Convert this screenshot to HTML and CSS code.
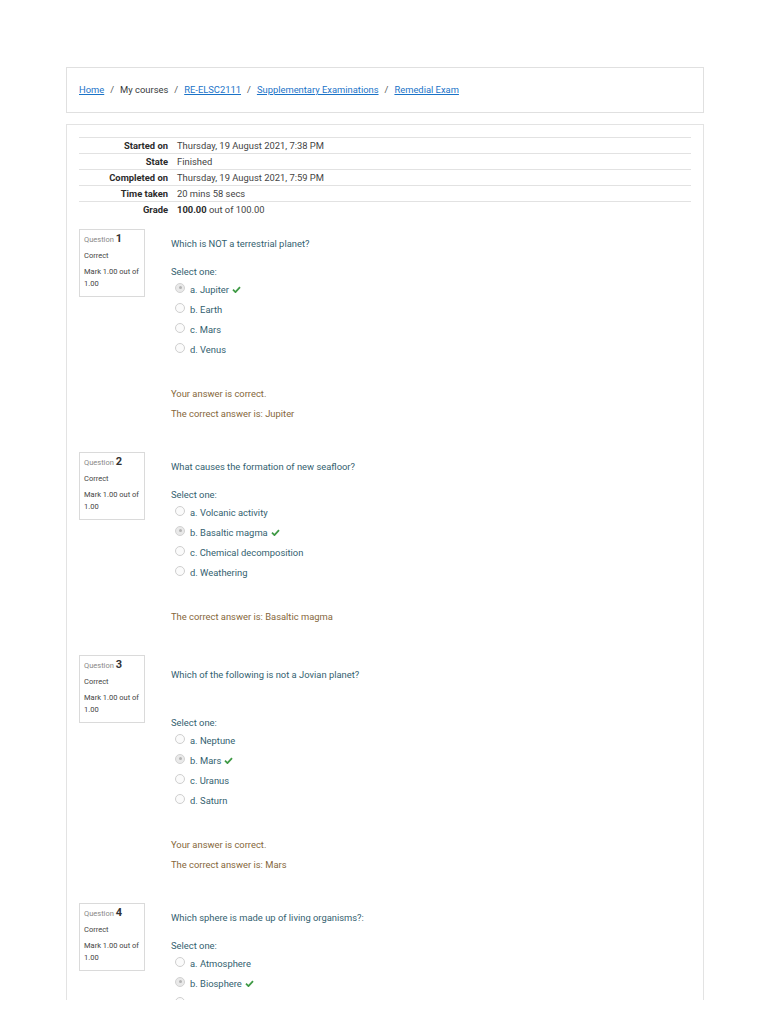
FILE: index.html
```html
<!DOCTYPE html>
<html>
<head>
<meta charset="utf-8">
<link rel="stylesheet" href="styles.css">
</head>
<body>
<div class="page">
  <div class="crumbs">
    <a href="#">Home</a><span class="sep">/</span><span>My courses</span><span class="sep">/</span><a href="#">RE-ELSC2111</a><span class="sep">/</span><a href="#">Supplementary Examinations</a><span class="sep">/</span><a href="#">Remedial Exam</a>
  </div>
  <div class="main">
    <div class="summary">
      <div class="row"><div class="lbl">Started on</div><div class="val">Thursday, 19 August 2021, 7:38 PM</div></div>
      <div class="row"><div class="lbl">State</div><div class="val">Finished</div></div>
      <div class="row"><div class="lbl">Completed on</div><div class="val">Thursday, 19 August 2021, 7:59 PM</div></div>
      <div class="row"><div class="lbl">Time taken</div><div class="val">20 mins 58 secs</div></div>
      <div class="row"><div class="lbl">Grade</div><div class="val"><b>100.00</b> out of 100.00</div></div>
    </div>

    <div class="q">
      <div class="info">
        <div class="qno">Question <b>1</b></div>
        <div class="state">Correct</div>
        <div class="grade">Mark 1.00 out of 1.00</div>
      </div>
      <div class="content">
        <div class="qtext">Which is NOT a terrestrial planet?</div>
        <div class="prompt">Select one:</div>
        <div class="opts">
          <div class="opt"><span class="radio on"></span>a. Jupiter<svg class="tick" viewBox="0 0 10 8"><path d="M1 4.2 L3.8 7 L9 1.2" fill="none" stroke="#3f9a45" stroke-width="2"/></svg></div>
          <div class="opt"><span class="radio"></span>b. Earth</div>
          <div class="opt"><span class="radio"></span>c. Mars</div>
          <div class="opt"><span class="radio"></span>d. Venus</div>
        </div>
        <div class="fb">
          <div>Your answer is correct.</div>
          <div>The correct answer is: Jupiter</div>
        </div>
      </div>
    </div>

    <div class="q">
      <div class="info">
        <div class="qno">Question <b>2</b></div>
        <div class="state">Correct</div>
        <div class="grade">Mark 1.00 out of 1.00</div>
      </div>
      <div class="content">
        <div class="qtext">What causes the formation of new seafloor?</div>
        <div class="prompt">Select one:</div>
        <div class="opts">
          <div class="opt"><span class="radio"></span>a. Volcanic activity</div>
          <div class="opt"><span class="radio on"></span>b. Basaltic magma<svg class="tick" viewBox="0 0 10 8"><path d="M1 4.2 L3.8 7 L9 1.2" fill="none" stroke="#3f9a45" stroke-width="2"/></svg></div>
          <div class="opt"><span class="radio"></span>c. Chemical decomposition</div>
          <div class="opt"><span class="radio"></span>d. Weathering</div>
        </div>
        <div class="fb">
          <div>The correct answer is: Basaltic magma</div>
        </div>
      </div>
    </div>

    <div class="q">
      <div class="info">
        <div class="qno">Question <b>3</b></div>
        <div class="state">Correct</div>
        <div class="grade">Mark 1.00 out of 1.00</div>
      </div>
      <div class="content">
        <div class="qtext tall">Which of the following is not a Jovian planet?</div>
        <div class="prompt">Select one:</div>
        <div class="opts">
          <div class="opt"><span class="radio"></span>a. Neptune</div>
          <div class="opt"><span class="radio on"></span>b. Mars<svg class="tick" viewBox="0 0 10 8"><path d="M1 4.2 L3.8 7 L9 1.2" fill="none" stroke="#3f9a45" stroke-width="2"/></svg></div>
          <div class="opt"><span class="radio"></span>c. Uranus</div>
          <div class="opt"><span class="radio"></span>d. Saturn</div>
        </div>
        <div class="fb">
          <div>Your answer is correct.</div>
          <div>The correct answer is: Mars</div>
        </div>
      </div>
    </div>

    <div class="q">
      <div class="info">
        <div class="qno">Question <b>4</b></div>
        <div class="state">Correct</div>
        <div class="grade">Mark 1.00 out of 1.00</div>
      </div>
      <div class="content">
        <div class="qtext">Which sphere is made up of living organisms?:</div>
        <div class="prompt">Select one:</div>
        <div class="opts">
          <div class="opt"><span class="radio"></span>a. Atmosphere</div>
          <div class="opt"><span class="radio on"></span>b. Biosphere<svg class="tick" viewBox="0 0 10 8"><path d="M1 4.2 L3.8 7 L9 1.2" fill="none" stroke="#3f9a45" stroke-width="2"/></svg></div>
          <div class="opt"><span class="radio"></span>c. Geosphere</div>
        </div>
      </div>
    </div>
  </div>
</div>
</body>
</html>
```

FILE: styles.css
```css
html, body {
  margin: 0;
  padding: 0;
  background: #ffffff;
}
body {
  font-family: Roboto, "Liberation Sans", Arial, sans-serif;
  font-size: 9.4px;
  color: #333333;
}
.page {
  height: 1000px;
  overflow: hidden;
  padding: 67px 0 0 66px;
  box-sizing: border-box;
}
.crumbs {
  width: 638px;
  box-sizing: border-box;
  height: 46px;
  border: 1px solid #e0e0e0;
  padding: 0 12px;
  display: flex;
  align-items: center;
  color: #373a3c;
  line-height: 14px;
}
.crumbs a {
  color: #1a73c8;
  text-decoration: underline;
}
.crumbs .sep {
  padding: 0 6px;
  color: #555;
}
.main {
  margin-top: 11px;
  width: 638px;
  box-sizing: border-box;
  border: 1px solid #e3e3e3;
  border-bottom: none;
  padding: 12px 12px 0 12px;
  min-height: 900px;
}
.summary {
  display: flex;
  flex-direction: column;
}
.row {
  display: flex;
  height: 16px;
  align-items: center;
  border-top: 1px solid #e2e2e2;
  box-sizing: border-box;
}
.lbl {
  width: 89px;
  text-align: right;
  font-weight: 700;
  color: #2b2b2b;
}
.val {
  padding-left: 9px;
  color: #444;
}
.val b {
  color: #2b2b2b;
}
.q {
  display: flex;
  align-items: flex-start;
  margin-top: 12px;
  margin-bottom: 16px;
}
.q + .q {
  margin-top: 28px;
}
.info {
  width: 66px;
  box-sizing: border-box;
  border: 1px solid #dadada;
  padding: 2px 4px 6px 4px;
  font-size: 7.5px;
  color: #444;
  flex: none;
}
.qno {
  line-height: 14px;
  color: #888;
}
.qno b {
  font-size: 11px;
  color: #333;
}
.state {
  margin-top: 2px;
  line-height: 14px;
}
.grade {
  margin-top: 3px;
  line-height: 12px;
}
.content {
  margin-left: 26px;
  color: #33616f;
}
.qtext {
  margin-top: 7px;
  line-height: 16px;
}
.qtext.tall {
  margin-top: 12px;
  margin-bottom: 33px;
}
.prompt {
  margin-top: 13px;
  line-height: 14px;
}
.qtext.tall + .prompt {
  margin-top: 0;
}
.opt {
  height: 20px;
  display: flex;
  align-items: center;
  padding-left: 4px;
}
.radio {
  width: 10px;
  height: 10px;
  box-sizing: border-box;
  border: 1px solid #cfcfcf;
  border-radius: 50%;
  background: #fbfbfb;
  margin-right: 5px;
  margin-top: -3px;
  position: relative;
}
.radio.on {
  background: #e9e9e9;
  border-color: #d2d2d2;
}
.radio.on::after {
  content: "";
  position: absolute;
  left: 2.5px;
  top: 2.5px;
  width: 3px;
  height: 3px;
  border-radius: 50%;
  background: #b4b4b4;
}
.tick {
  width: 9px;
  height: 7px;
  margin-left: 3px;
}
.fb {
  margin-top: 25px;
  color: #86673b;
}
.fb div {
  line-height: 20px;
}
```
